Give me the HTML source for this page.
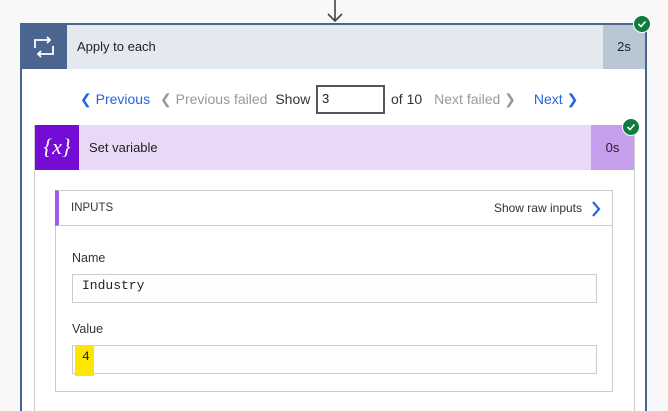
<!DOCTYPE html>
<html style="overflow:hidden;height:411px"><head><style>
body{margin:0;width:668px;height:411px;background:#f8f8f8;position:relative;overflow:hidden;font-family:"Liberation Sans",sans-serif;}
.a{position:absolute;}
</style></head><body>
<svg class="a" style="left:325px;top:0" width="20" height="24"><path d="M10 0V21M3 14L10 21L17 14" stroke="#444" stroke-width="1.6" fill="none"/></svg>
<div class="a" style="left:20px;top:23px;width:627px;height:388px;border:2px solid #4a6590;border-bottom:none;background:#fff;box-sizing:border-box"></div>
<div class="a" style="left:22px;top:25px;width:45px;height:44px;background:#4a6590"></div>
<svg class="a" style="left:32px;top:36px" width="24" height="22"><path d="M3 12V4H18M15 1L18 4L15 7M21 10V18H6M9 15L6 18L9 21" stroke="#fff" stroke-width="1.8" fill="none"/></svg>
<div class="a" style="left:67px;top:25px;width:536px;height:44px;background:#e4e8ef;font-size:13px;line-height:44px;padding-left:10px;box-sizing:border-box;color:#222">Apply to each</div>
<div class="a" style="left:603px;top:25px;width:42px;height:44px;background:#b9c6d4;font-size:13px;line-height:44px;text-align:center;color:#222">2s</div>
<div class="a" style="left:633px;top:15px;width:16px;height:16px;border-radius:50%;background:#107c41;border:1px solid #fff"><svg width="16" height="16"><path d="M4.5 8L7 10.5L11.5 5.5" stroke="#fff" stroke-width="1.6" fill="none"/></svg></div>
<div class="a" style="left:80px;top:90px;font-size:14px;line-height:18px;white-space:nowrap;color:#2266e3">
<span>❮&nbsp;Previous</span>
<span style="color:#999;margin-left:6px">❮&nbsp;Previous failed</span>
<span style="color:#333;margin-left:4px">Show</span>
</div>
<div class="a" style="left:316px;top:85px;width:69px;height:29px;border:2px solid #555;box-sizing:border-box;font-size:13px;padding:4px 4px;color:#222">3</div>
<div class="a" style="left:391px;top:90px;font-size:14px;line-height:18px;white-space:nowrap;color:#333">of 10<span style="color:#999;margin-left:12px">Next failed ❯</span><span style="color:#2266e3;margin-left:18px">Next ❯</span></div>
<div class="a" style="left:34px;top:125px;width:601px;height:300px;border:1px solid #ccc;background:#fff;box-sizing:border-box"></div>
<div class="a" style="left:35px;top:125px;width:44px;height:45px;background:#750cd6;color:#fff;font-family:'Liberation Serif',serif;font-size:22px;line-height:44px;text-align:center"><i>{x}</i></div>
<div class="a" style="left:79px;top:125px;width:512px;height:45px;background:#e9d9f7;font-size:13px;line-height:45px;padding-left:10px;box-sizing:border-box;color:#222">Set variable</div>
<div class="a" style="left:591px;top:125px;width:43px;height:45px;background:#c59fec;font-size:13px;line-height:45px;text-align:center;color:#222">0s</div>
<div class="a" style="left:622px;top:118px;width:16px;height:16px;border-radius:50%;background:#107c41;border:1px solid #fff"><svg width="16" height="16"><path d="M4.5 8L7 10.5L11.5 5.5" stroke="#fff" stroke-width="1.6" fill="none"/></svg></div>
<div class="a" style="left:55px;top:190px;width:558px;height:202px;border:1px solid #ccc;box-sizing:border-box"></div>
<div class="a" style="left:55px;top:190px;width:558px;height:36px;border:1px solid #ccc;border-left:4px solid #a259e8;box-sizing:border-box;font-size:11.5px;line-height:34px;padding-left:12px;color:#333">INPUTS<span style="position:absolute;right:30px;font-size:12px">Show raw inputs</span><svg style="position:absolute;right:10px;top:10px" width="12" height="16"><path d="M3 1L9 8L3 15" stroke="#2266e3" stroke-width="2.2" fill="none"/></svg></div>
<div class="a" style="left:72px;top:251px;font-size:12.5px;color:#333">Name</div>
<div class="a" style="left:72px;top:274px;width:525px;height:29px;border:1px solid #ccc;background:#fefefc;box-sizing:border-box;font-family:'Liberation Mono',monospace;font-size:13px;padding:3px 9px;color:#222">Industry</div>
<div class="a" style="left:72px;top:322px;font-size:12.5px;color:#333">Value</div>
<div class="a" style="left:72px;top:345px;width:525px;height:29px;border:1px solid #ccc;background:#fefefc;box-sizing:border-box"></div>
<div class="a" style="left:75px;top:345px;width:19px;height:31px;background:#ffe600;font-family:'Liberation Mono',monospace;font-size:13px;padding:4px 0 0 7px;box-sizing:border-box;color:#222">4</div>
</body></html>
